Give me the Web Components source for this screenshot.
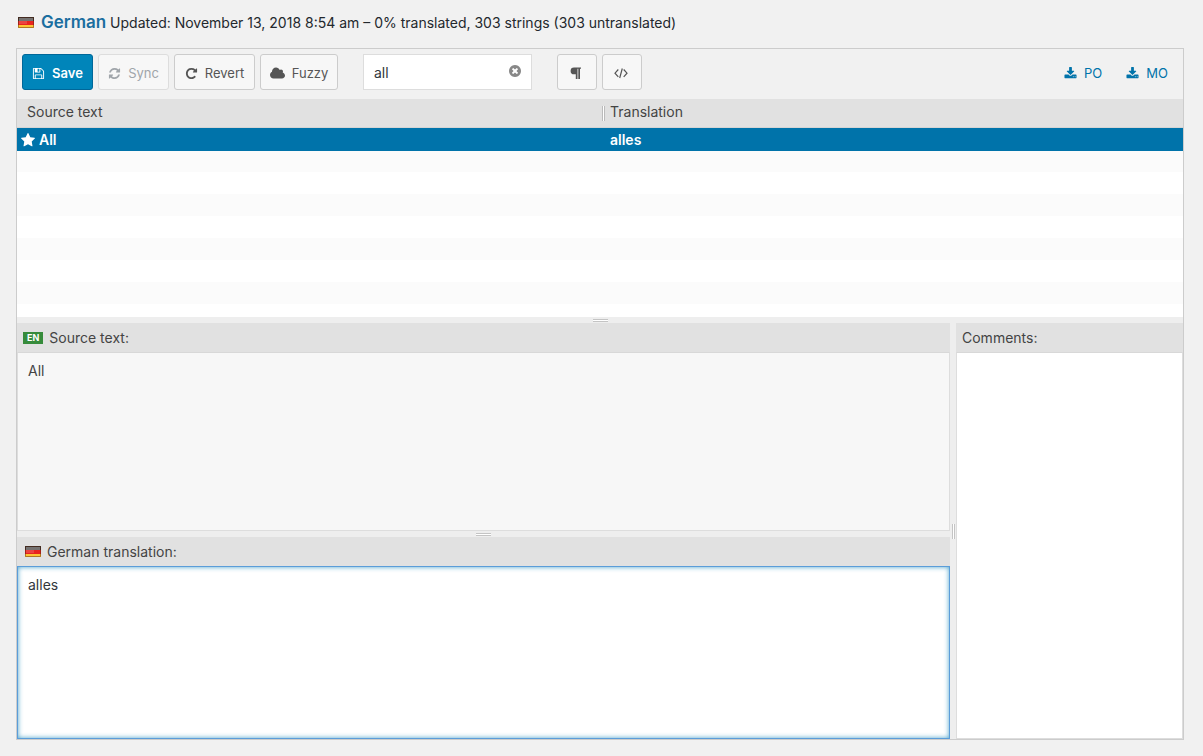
<!DOCTYPE html>
<html lang="en">
<head>
<meta charset="utf-8">
<title>German – translation editor</title>
<style>
html, body { height: 100%; }
body {
  margin: 0; background: #f1f1f1; color: #23282d;
  font: 14px/20px Inter, Roboto, sans-serif;
  --edge: #ccc; --bar: #e1e1e1; --gutter: #eee; --blue: #0073aa;
}
</style>
</head>
<body>
<po-app></po-app>
<script>
const ICONS = {
  save: ['0 0 1792 1792', '<path d="M512 1536h768v-384h-768v384zm896 0h128v-896q0-14-10-38.500t-20-34.500l-281-281q-10-10-34-20t-39-10v416q0 40-28 68t-68 28h-576q-40 0-68-28t-28-68v-416h-128v1280h128v-416q0-40 28-68t68-28h832q40 0 68 28t28 68v416zm-384-928v-320q0-13-9.500-22.500t-22.500-9.500h-192q-13 0-22.500 9.500t-9.500 22.500v320q0 13 9.500 22.500t22.500 9.500h192q13 0 22.500-9.500t9.500-22.500zm640 32v928q0 40-28 68t-68 28h-1344q-40 0-68-28t-28-68v-1344q0-40 28-68t68-28h928q40 0 88 20t76 48l280 280q28 28 48 76t20 88z"/>'],
  sync: ['0 0 1792 1792', '<path d="M1639 1056q0 5-1 7-64 268-268 434.500t-478 166.500q-146 0-282.500-55t-243.500-157l-129 129q-19 19-45 19t-45-19-19-45v-448q0-26 19-45t45-19h448q26 0 45 19t19 45-19 45l-137 137q71 66 161 102t187 36q134 0 250-65t186-179q11-17 53-117 8-23 30-23h192q13 0 22.500 9.500t9.500 22.500zm25-800v448q0 26-19 45t-45 19h-448q-26 0-45-19t-19-45 19-45l138-138q-148-137-349-137-134 0-250 65t-186 179q-11 17-53 117-8 23-30 23h-199q-13 0-22.500-9.500t-9.500-22.500v-7q65-268 270-434.500t480-166.500q146 0 284 55.500t245 156.500l130-129q19-19 45-19t45 19 19 45z"/>'],
  revert: ['0 0 1792 1792', '<path d="M1664 256v448q0 26-19 45t-45 19h-448q-42 0-59-40-17-39 14-69l138-138q-148-137-349-137-104 0-198.500 40.500t-163.500 109.500-109.500 163.500-40.500 198.500 40.500 198.500 109.500 163.500 163.500 109.500 198.500 40.500q119 0 225-52t179-147q7-10 23-12 15 0 25 9l137 138q9 8 9.500 20.500t-7.500 22.500q-109 132-264 204.500t-327 72.500q-156 0-298-61t-245-164-164-245-61-298 61-298 164-245 245-164 298-61q147 0 284.500 55.500t244.500 156.500l130-129q29-31 70-14 39 17 39 59z"/>'],
  cloud: ['-64 0 1920 1792', '<path d="M1856 1152q0 159-112.500 271.500t-271.500 112.500h-1088q-185 0-316.500-131.500t-131.500-316.500q0-132 71-241.500t187-163.500q-2-28-2-43 0-212 150-362t362-150q158 0 286.500 88t187.500 230q70-62 166-62 106 0 181 75t75 181q0 75-41 138 129 30 213 134.500t84 239.500z"/>'],
  download: ['0 0 1792 1792', '<path d="M1344 1344q0-26-19-45t-45-19-45 19-19 45 19 45 45 19 45-19 19-45zm256 0q0-26-19-45t-45-19-45 19-19 45 19 45 45 19 45-19 19-45zm128-224v320q0 40-28 68t-68 28h-1472q-40 0-68-28t-28-68v-320q0-40 28-68t68-28h465l135 136q58 56 136 56t136-56l136-136h464q40 0 68 28t28 68zm-325-569q17 41-14 70l-448 448q-18 19-45 19t-45-19l-448-448q-31-29-14-70 17-39 59-39h256v-448q0-26 19-45t45-19h256q26 0 45 19t19 45v448h256q42 0 59 39z"/>'],
  clear: ['128 128 1536 1536', '<path d="M1277 1122q0-26-19-45l-181-181 181-181q19-19 19-45 0-27-19-46l-90-90q-19-19-46-19-26 0-45 19l-181 181-181-181q-19-19-45-19-27 0-46 19l-90 90q-19 19-19 46 0 26 19 45l181 181-181 181q-19 19-19 45 0 27 19 46l90 90q19 19 46 19 26 0 45-19l181-181 181 181q19 19 45 19 27 0 46-19l90-90q19-19 19-46zm387-226q0 209-103 385.500t-279.500 279.500-385.500 103-385.500-103-279.500-279.500-103-385.500 103-385.500 279.500-279.500 385.500-103 385.500 103 279.500 279.500 103 385.500z"/>'],
  star: ['64 32 1664 1664', '<path d="M1728 647q0 22-26 48l-363 354 86 500q1 7 1 20 0 21-10.500 35.500t-30.500 14.500q-19 0-40-12l-449-236-449 236q-22 12-40 12-21 0-31.500-14.500t-10.500-35.500q0-6 2-20l86-500-364-354q-25-27-25-48 0-37 56-46l502-73 225-455q19-41 49-41t49 41l225 455 502 73q56 9 56 46z"/>'],
  pilcrow: ['0 0 14 14', '<path d="M5 1.500h7v1.200h-1V13H9.300V2.700H8.500V13H6.800V8.300H5a3.400 3.400 0 0 1 0-6.800z"/>'],
  code: ['0 0 14 14', '<path d="M4.300 3.500 1 7.200l3.300 3.700M9.700 3.500 13 7.200l-3.300 3.700M8.300 2.500 5.700 12" fill="none" stroke="currentColor" stroke-width="1.200"/>']
};

function define(name, html, setup) {
  const tpl = document.createElement('template');
  tpl.innerHTML = html;
  customElements.define(name, class extends HTMLElement {
    connectedCallback() {
      if (this.shadowRoot) return;
      const root = this.attachShadow({ mode: 'open' });
      root.append(tpl.content.cloneNode(true));
      if (setup) setup(this, root);
    }
  });
}

define('po-icon', `
<style>
:host { display: inline-block; flex: none; width: 14px; height: 14px; }
svg { display: block; width: 100%; height: 100%; fill: currentColor; }
</style>
<svg aria-hidden="true"></svg>`, (el, root) => {
  const [box, shape] = ICONS[el.getAttribute('name')];
  const svg = root.querySelector('svg');
  svg.setAttribute('viewBox', box);
  svg.innerHTML = shape;
});

define('po-flag', `
<style>
:host { display: block; flex: none; width: 16px; height: 11px; }
svg { display: block; }
</style>
<svg width="16" height="11" role="img" aria-label="German flag">
  <path fill="#3a3634" d="M0 0h16v4H0z"/><path fill="#e8231f" d="M0 4h16v4H0z"/><path fill="#fdc436" d="M0 8h16v3H0z"/>
  <path fill="#fff" opacity=".3" d="M1 1h14v3H1z"/><path fill="#fff" opacity=".15" d="M1 4h8v3H1z"/>
  <path fill="none" stroke="#50200c" stroke-opacity=".45" d="M.5.5h15v10H.5z"/>
</svg>`);

define('po-button', `
<style>
:host { display: block; }
button {
  display: flex; align-items: center; justify-content: center; gap: 7px;
  box-sizing: border-box; width: 100%; height: 36px; margin: 0; padding: 2px 10px 0;
  border: 1px solid #ccc; border-radius: 3px; background: #f7f7f7; color: #555;
  font: 13px/20px Inter, Roboto, sans-serif; white-space: nowrap;
}
:host([primary]) button { background: #0085ba; border-color: #006799; color: #fff; font-weight: 600; }
:host([label]) button { padding-right: 12px; }
button:disabled { border-color: #ddd; color: #a0a5aa; }
</style>
<button type="button"><slot></slot></button>`, (el, root) => {
  const b = root.querySelector('button');
  b.disabled = el.hasAttribute('disabled');
  if (el.hasAttribute('label')) b.setAttribute('aria-label', el.getAttribute('label'));
});

define('po-search', `
<style>
:host { display: block; position: relative; }
input {
  display: block; box-sizing: border-box; width: 100%; height: 36px; margin: 0; padding: 0 30px 0 10px;
  border: 1px solid #ddd; border-radius: 0; background: #fff; color: #32373c; outline: 0;
  font: 14px/20px Inter, Roboto, sans-serif;
}
button { position: absolute; top: 11px; right: 11px; padding: 0; border: 0; background: none; color: #888; }
po-icon { display: block; width: 12px; height: 12px; }
</style>
<input type="text" value="all" aria-label="Filter translations">
<button type="button" aria-label="Clear filter"><po-icon name="clear"></po-icon></button>`);

define('po-title', `
<style>
:host { display: flex; align-items: center; height: 48px; padding: 0 2px; box-sizing: border-box; }
p { margin: 0; padding-bottom: 4px; font-size: 14px; }
po-flag { margin: 0 7px 4px 0; }
a { color: #1a6e9f; font-size: 17px; font-weight: 600; text-decoration: none; }
</style>
<po-flag></po-flag>
<p><a href="#german">German</a> <slot></slot></p>`);

define('po-toolbar', `
<style>
:host { display: flex; align-items: flex-start; gap: 5px; box-sizing: border-box; height: 50px; padding: 5px; }
.save, .sync { width: 71px; } .revert { width: 81px; } .fuzzy { width: 78px; }
.save po-icon, .sync po-icon, .revert po-icon { width: 13px; height: 13px; }
.fuzzy po-icon { width: 15px; height: 15px; }
po-search { width: 169px; margin: 0 20px; }
.square { width: 40px; }
nav { display: flex; gap: 24px; margin-left: auto; padding: 9px 10px 0 0; }
a { display: flex; align-items: center; gap: 7px; color: var(--blue); font-size: 13px; text-decoration: none; }
nav po-icon { width: 13px; height: 13px; }
</style>
<po-button class="save" primary><po-icon name="save"></po-icon>Save</po-button>
<po-button class="sync" disabled><po-icon name="sync"></po-icon>Sync</po-button>
<po-button class="revert"><po-icon name="revert"></po-icon>Revert</po-button>
<po-button class="fuzzy"><po-icon name="cloud"></po-icon>Fuzzy</po-button>
<po-search></po-search>
<po-button class="square" label="Toggle invisibles"><po-icon name="pilcrow"></po-icon></po-button>
<po-button class="square" label="Toggle code view"><po-icon name="code"></po-icon></po-button>
<nav>
  <a href="#po"><po-icon name="download"></po-icon>PO</a>
  <a href="#mo"><po-icon name="download"></po-icon>MO</a>
</nav>`);

define('po-list', `
<style>
:host {
  display: block; overflow: hidden; min-height: 0;
  background: repeating-linear-gradient(#fbfbfb 0 22px, #fff 22px 44px) 0 51px no-repeat #fff;
}
table { width: 100%; border-collapse: separate; border-spacing: 0; table-layout: fixed; text-align: left; }
th { position: relative; height: 29px; box-sizing: border-box; padding: 0 10px 2px; background: var(--bar); border-bottom: 1px solid #d4d4d4; color: #444; font-weight: 400; }
th + th::before { content: ""; position: absolute; left: 2px; top: 7px; width: 1px; height: 15px; background: #fff; border: solid #bbb; border-width: 0 1px; }
td { height: 23px; box-sizing: border-box; padding: 0 10px; background: var(--blue); color: #fff; font-weight: 600; }
td:first-child { padding-left: 4px; }
span { display: flex; align-items: center; gap: 4px; }
</style>
<table>
  <thead><tr><th scope="col">Source text</th><th scope="col">Translation</th></tr></thead>
  <tbody><tr aria-selected="true"><td><span><po-icon name="star"></po-icon>All</span></td><td>alles</td></tr></tbody>
</table>`);

define('po-grip', `
<style>
:host { display: flex; align-items: center; justify-content: center; background: var(--gutter); }
i { box-sizing: border-box; width: 15px; height: 3px; border: solid #c4c4c4; border-width: 1px 0; background: #fff; }
:host([vertical]) i { width: 3px; height: 15px; border-width: 0 1px; }
</style><i></i>`);

define('po-field', `
<style>
:host { display: flex; flex-direction: column; min-width: 0; min-height: 0; }
label { display: flex; align-items: center; gap: 6px; box-sizing: border-box; height: 29px; padding: 0 6px; background: var(--bar); color: #444; }
textarea {
  flex: 1; display: block; box-sizing: border-box; width: 100%; min-height: 0; margin: 0; padding: 8px 10px;
  border: 1px solid #ddd; border-top-color: #d8d8d8; border-radius: 0; outline: 0; resize: none;
  background: #fff; color: #32373c; font: 14px/20px Inter, Roboto, sans-serif;
}
textarea:read-only { background: #f7f7f7; color: #444; }
:host([active]) label { padding-left: 8px; }
:host([active]) textarea { border-color: #5b9dd9; box-shadow: inset 0 0 5px #1e8cbecc; }
</style>
<label for="text"><slot></slot></label>
<textarea id="text" spellcheck="false"></textarea>`, (el, root) => {
  const t = root.querySelector('textarea');
  t.value = el.getAttribute('value') || '';
  t.readOnly = el.hasAttribute('readonly');
});

define('po-editor', `
<style>
:host { display: grid; box-sizing: border-box; grid-template-rows: auto 218fr 6px 416fr; border: 1px solid var(--edge); min-height: 480px; }
.lower { display: grid; grid-template-columns: 933fr 6px 227fr; min-height: 0; }
.left { display: grid; grid-template-rows: 208fr 6px 202fr; min-height: 0; min-width: 0; }
b { padding: 0 4px; background: #368b3b; color: #fff; font-size: 9px; line-height: 12px; font-weight: 700; }
</style>
<po-toolbar></po-toolbar>
<po-list></po-list>
<po-grip></po-grip>
<div class="lower">
  <div class="left">
    <po-field value="All" readonly><b>EN</b>Source text:</po-field>
    <po-grip></po-grip>
    <po-field value="alles" active><po-flag></po-flag>German translation:</po-field>
  </div>
  <po-grip vertical></po-grip>
  <po-field>Comments:</po-field>
</div>`);

define('po-app', `
<style>
:host { display: flex; flex-direction: column; box-sizing: border-box; min-height: 100vh; padding: 0 19px 16px 16px; }
po-editor { flex: 1; }
</style>
<po-title>Updated: November 13, 2018 8:54 am – 0% translated, 303 strings (303 untranslated)</po-title>
<po-editor></po-editor>`);
</script>
</body>
</html>
